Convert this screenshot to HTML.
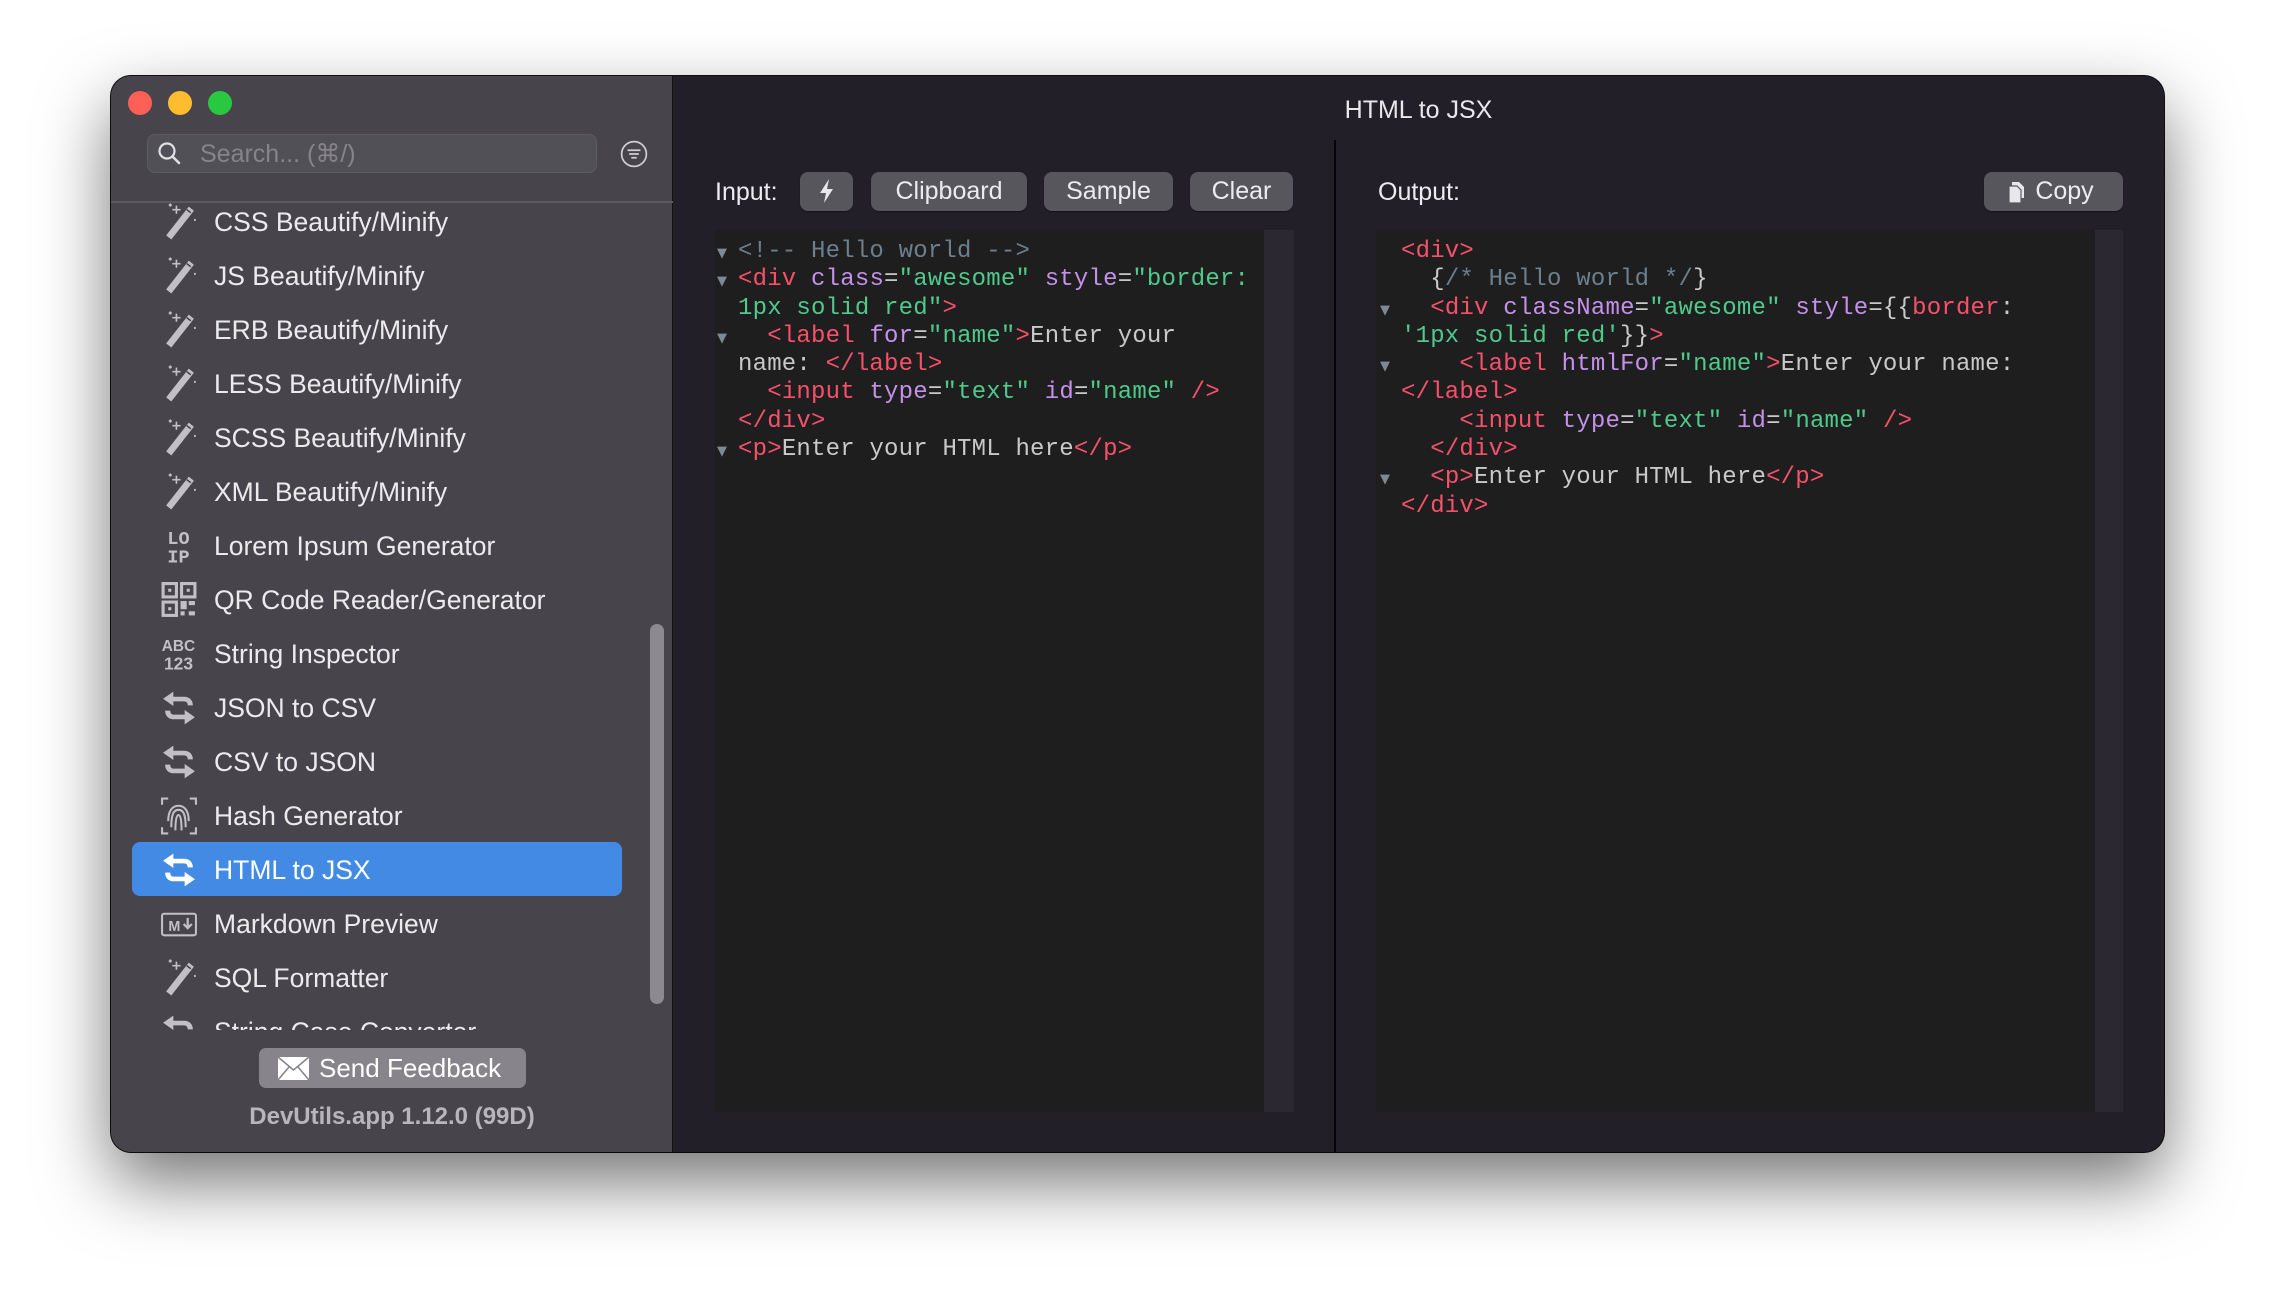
<!DOCTYPE html>
<html><head><meta charset="utf-8"><style>
*{margin:0;padding:0;box-sizing:border-box}
body{width:2276px;height:1300px;background:#fff;position:relative;overflow:hidden;font-family:"Liberation Sans",sans-serif}
.win{position:absolute;left:111px;top:76px;width:2053px;height:1076px;border-radius:20px;overflow:hidden;background:#221f29;box-shadow:0 30px 70px rgba(0,0,0,.55),0 0 0 1px #111;}
.abs{position:absolute}
.side{position:absolute;left:0;top:0;width:562px;height:1076px;background:#47454b;border-right:1px solid #111}
.dot{position:absolute;top:15px;width:24px;height:24px;border-radius:50%}
.item{position:absolute;left:0;width:562px;height:54px;color:#ebebee;font-size:26.5px;line-height:54px;padding-left:103px}
.item svg{position:absolute;left:49px;top:7px}
.sel{position:absolute;left:21px;top:766px;width:490px;height:54px;background:#438ae4;border-radius:8px}
.btn{position:absolute;top:96px;height:39px;background:#58565d;border-radius:8px;color:#ececee;font-size:25px;line-height:39px;text-align:center;box-shadow:0 1px 1px rgba(0,0,0,.4)}
.ed{position:absolute;top:154px;height:882px;background:#1e1e1e}
.gut{position:absolute;top:154px;height:882px;background:#2b2832}
.code{position:absolute;top:162px;font-family:"Liberation Mono",monospace;font-size:24px;line-height:28.3px;letter-spacing:.2px;white-space:pre;color:#c9c9c9}
.t{color:#f7506b}.a{color:#c490ea}.s{color:#4fc98c}.c{color:#6c7f8f}.g{color:#c9c9c9}
.arr{position:absolute;font-size:13px;color:#7c8a96;font-family:"DejaVu Sans",sans-serif}
</style></head><body>
<div class="win">
 <div class="side">
  <div class="dot" style="left:17px;background:#fe5f57"></div>
  <div class="dot" style="left:57px;background:#febc2e"></div>
  <div class="dot" style="left:97px;background:#28c840"></div>
  <div class="abs" style="left:36px;top:58px;width:450px;height:39px;border-radius:8px;background:#525057;border:1px solid #5e5c63"></div>
  <svg class="abs" style="left:46px;top:65px" width="26" height="26" viewBox="0 0 26 26"><circle cx="10" cy="10" r="7.5" fill="none" stroke="#e0e0e0" stroke-width="2.2"/><path d="M15.5 15.5L22 22" stroke="#e0e0e0" stroke-width="2.6" stroke-linecap="round"/></svg>
  <div class="abs" style="left:89px;top:59px;line-height:39px;font-size:25px;color:#86848a">Search... (⌘/)</div>
  <svg class="abs" style="left:509px;top:64px" width="28" height="28" viewBox="0 0 26 26"><circle cx="13" cy="13" r="11.5" fill="none" stroke="#cfcfd2" stroke-width="1.6"/><path d="M7 9.5h12M8.5 13h9M10.5 16.5h5" stroke="#cfcfd2" stroke-width="1.7"/></svg>
  <div class="abs" style="left:0;top:125px;width:562px;height:2px;background:#5c5a60"></div>
  <div class="abs" style="left:0;top:127px;width:562px;height:827px;overflow:hidden">
   <div class="sel" style="top:639px"></div>
   <div id="list"></div>
  </div>
  <div class="abs" style="left:539px;top:548px;width:14px;height:380px;border-radius:7px;background:#8c8a90"></div>
  <div class="abs" style="left:148px;top:972px;width:267px;height:40px;border-radius:7px;background:#87858b;color:#fff;font-size:26px;line-height:40px;padding-left:60px">Send Feedback</div>
  <svg class="abs" style="left:166px;top:980px" width="33" height="25" viewBox="0 0 33 25"><rect x="1" y="1" width="31" height="23" fill="#fff"/><path d="M1 1L16.5 14L32 1M1 24L12 11M32 24L21 11" fill="none" stroke="#87858b" stroke-width="1.6"/></svg>
  <div class="abs" style="left:0;top:1027px;width:562px;text-align:center;font-size:24px;font-weight:bold;color:#b8b6bc">DevUtils.app 1.12.0 (99D)</div>
 </div>
 <div class="abs" style="left:562px;top:18px;width:1491px;text-align:center;font-size:25px;color:#e8e8ea;line-height:32px">HTML to JSX</div>
 <div class="abs" style="left:1223px;top:64px;width:2px;height:1012px;background:#050505"></div>
 <div class="abs" style="left:604px;top:100px;font-size:25px;color:#ececee;line-height:32px">Input:</div>
 <div class="btn" style="left:689px;width:53px"><svg width="18" height="26" viewBox="0 0 18 26" style="margin-top:6px"><path d="M11 1L2 15h6l-2 10 9-14H9z" fill="#e8e8ea"/></svg></div>
 <div class="btn" style="left:760px;width:156px">Clipboard</div>
 <div class="btn" style="left:933px;width:129px">Sample</div>
 <div class="btn" style="left:1079px;width:103px">Clear</div>
 <div class="abs" style="left:1267px;top:100px;font-size:25px;color:#ececee;line-height:32px">Output:</div>
 <div class="btn" style="left:1873px;width:139px;padding-left:22px">Copy</div>
 <svg class="abs" style="left:1897px;top:104px" width="20" height="24" viewBox="0 0 20 24"><path d="M4 2h7l5 5v11H4z" fill="#e8e8ea"/><path d="M1 6h8l4 4v13H1z" fill="#e8e8ea" stroke="#58565d" stroke-width="1.2"/></svg>
 <div class="ed" style="left:604px;width:549px"></div>
 <div class="gut" style="left:1153px;width:30px"></div>
 <div class="ed" style="left:1265px;width:719px"></div>
 <div class="gut" style="left:1984px;width:28px"></div>
 <div class="code" style="left:627px"><span class="c">&lt;!-- Hello world --&gt;</span>
<span class="t">&lt;div</span> <span class="a">class</span>=<span class="s">"awesome"</span> <span class="a">style</span>=<span class="s">"border:</span>
<span class="s">1px solid red"</span><span class="t">&gt;</span>
  <span class="t">&lt;label</span> <span class="a">for</span>=<span class="s">"name"</span><span class="t">&gt;</span>Enter your
name: <span class="t">&lt;/label&gt;</span>
  <span class="t">&lt;input</span> <span class="a">type</span>=<span class="s">"text"</span> <span class="a">id</span>=<span class="s">"name"</span> <span class="t">/&gt;</span>
<span class="t">&lt;/div&gt;</span>
<span class="t">&lt;p&gt;</span>Enter your HTML here<span class="t">&lt;/p&gt;</span></div>
 <div class="arr" style="left:606px;top:164px;line-height:28.3px">▼<br>▼<br><br>▼<br><br><br><br>▼</div>
 <div class="code" style="left:1290px"><span class="t">&lt;div&gt;</span>
  {<span class="c">/* Hello world */</span>}
  <span class="t">&lt;div</span> <span class="a">className</span>=<span class="s">"awesome"</span> <span class="a">style</span>={{<span class="t">border</span>:
<span class="s">'1px solid red'</span>}}<span class="t">&gt;</span>
    <span class="t">&lt;label</span> <span class="a">htmlFor</span>=<span class="s">"name"</span><span class="t">&gt;</span>Enter your name:
<span class="t">&lt;/label&gt;</span>
    <span class="t">&lt;input</span> <span class="a">type</span>=<span class="s">"text"</span> <span class="a">id</span>=<span class="s">"name"</span> <span class="t">/&gt;</span>
  <span class="t">&lt;/div&gt;</span>
  <span class="t">&lt;p&gt;</span>Enter your HTML here<span class="t">&lt;/p&gt;</span>
<span class="t">&lt;/div&gt;</span></div>
 <div class="arr" style="left:1269px;top:164px;line-height:28.3px"><br><br>▼<br><br>▼<br><br><br><br>▼</div>
</div>
<script>
var wand='<svg width="38" height="40" viewBox="0 0 37 38"><path d="M28 4l5 4-22 28-5-4z" fill="#c2c0c6"/><path d="M26 7l4 3" stroke="#47454b" stroke-width="1.5"/><path d="M16 3v8M12 7h8M10 1v3M8.5 2.5h3M34 16v2" stroke="#c2c0c6" stroke-width="1.6"/></svg>';
var swap=function(c){return '<svg width="38" height="40" viewBox="0 0 37 38"><path d="M13 3L3 10l10 7v-4.5h10c3 0 4 1.5 4 4h5c0-5-3-8.5-9-8.5H13z" fill="'+c+'"/><path d="M24 35l10-7-10-7v4.5H14c-3 0-4-1.5-4-4H5c0 5 3 8.5 9 8.5h10z" fill="'+c+'"/></svg>';};
var lorem='<svg width="38" height="40" viewBox="0 0 37 38"><text x="18" y="17" text-anchor="middle" font-family="Liberation Mono" font-weight="bold" font-size="18" fill="#c2c0c6">LO</text><text x="18" y="35" text-anchor="middle" font-family="Liberation Mono" font-weight="bold" font-size="18" fill="#c2c0c6">IP</text></svg>';
var qr='<svg width="38" height="40" viewBox="0 0 37 38"><g fill="none" stroke="#c2c0c6" stroke-width="3"><rect x="3" y="3" width="13" height="13"/><rect x="21" y="3" width="13" height="13"/><rect x="3" y="21" width="13" height="13"/></g><g fill="#c2c0c6"><rect x="8" y="8" width="3" height="3"/><rect x="26" y="8" width="3" height="3"/><rect x="8" y="26" width="3" height="3"/><rect x="20" y="20" width="6" height="8"/><rect x="28" y="20" width="6" height="4"/><rect x="28" y="30" width="6" height="4"/><rect x="20" y="30" width="4" height="4"/></g></svg>';
var abc='<svg width="38" height="40" viewBox="0 0 37 38"><text x="18" y="16" text-anchor="middle" font-family="Liberation Sans" font-weight="bold" font-size="15" fill="#c2c0c6">ABC</text><text x="18" y="34" text-anchor="middle" font-family="Liberation Sans" font-weight="bold" font-size="17" fill="#c2c0c6">123</text></svg>';
var hash='<svg width="38" height="40" viewBox="0 0 37 38"><g fill="none" stroke="#c2c0c6" stroke-width="2"><path d="M2 8V2h6M29 2h6v6M2 30v6h6M29 36h6v-6"/><path d="M8 24c0-10 4-15 10-15s10 5 10 15M11 30c0-12 2-17 7-17s7 5 7 17M15 33c0-10 1-15 3-15s3 5 3 15"/></g></svg>';
var md='<svg width="38" height="40" viewBox="0 0 37 38"><rect x="2" y="9" width="33" height="21" rx="2" fill="none" stroke="#c2c0c6" stroke-width="2"/><text x="14" y="26" text-anchor="middle" font-family="Liberation Sans" font-weight="bold" font-size="14" fill="#c2c0c6">M</text><path d="M27 13v10M23 19l4 4 4-4" fill="none" stroke="#c2c0c6" stroke-width="2.2"/></svg>';
var back='<svg width="38" height="40" viewBox="0 0 37 38"><path d="M13 3L3 10l10 7v-4.5h10c3 0 4 1.5 4 4h5c0-5-3-8.5-9-8.5H13z" fill="#c2c0c6"/></svg>';
var items=[[wand,'CSS Beautify/Minify'],[wand,'JS Beautify/Minify'],[wand,'ERB Beautify/Minify'],[wand,'LESS Beautify/Minify'],[wand,'SCSS Beautify/Minify'],[wand,'XML Beautify/Minify'],[lorem,'Lorem Ipsum Generator'],[qr,'QR Code Reader/Generator'],[abc,'String Inspector'],[swap('#c2c0c6'),'JSON to CSV'],[swap('#c2c0c6'),'CSV to JSON'],[hash,'Hash Generator'],[swap('#fff'),'HTML to JSX'],[md,'Markdown Preview'],[wand,'SQL Formatter'],[back,'String Case Converter']];
var h='';for(var i=0;i<items.length;i++){h+='<div class="item" style="top:'+(-8+i*54)+'px'+(i==12?';color:#fff':'')+'">'+items[i][0]+items[i][1]+'</div>';}
document.getElementById('list').innerHTML=h;
</script>
</body></html>
